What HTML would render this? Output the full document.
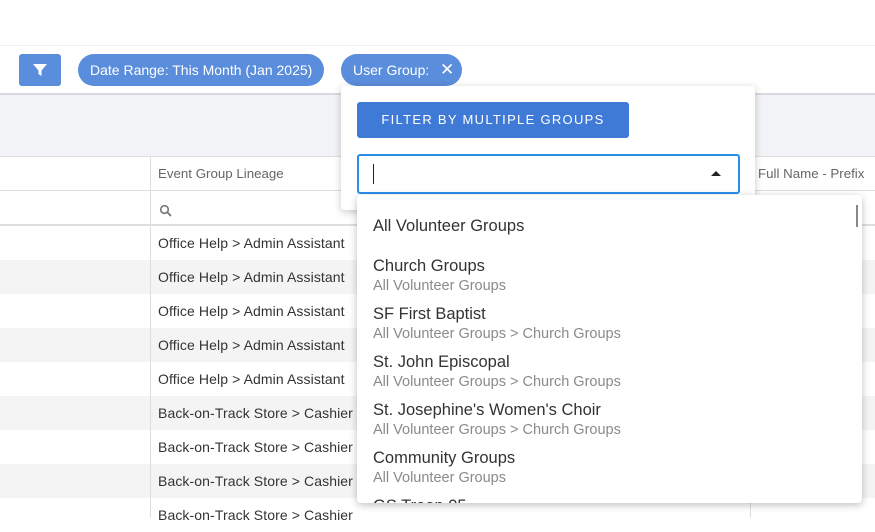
<!DOCTYPE html>
<html><head><style>
*{box-sizing:border-box;margin:0;padding:0}
body{width:875px;height:518px;overflow:hidden;background:#fff;font-family:"Liberation Sans","DejaVu Sans",sans-serif;position:relative;color:#333}
.abs{position:absolute}
.chip{position:absolute;top:54px;height:32px;border-radius:16px;background:#5a8ddb;color:#fff;font-size:14px;line-height:32px;padding:0 12px}
.row{position:absolute;left:0;width:875px;height:34px;font-size:14px;color:#333}
.row span{position:absolute;left:158px;top:9px;letter-spacing:0.1px}
.g{background:#f4f4f4}
.item{position:absolute;left:373px;font-size:16.5px;color:#333}
.sub{position:absolute;left:373px;font-size:14.5px;color:#8a8a8a}
</style></head><body>
<div class="abs" style="left:0;top:45px;width:875px;height:1px;background:#eceef2"></div>
<div class="abs" style="left:0;top:93px;width:875px;height:2px;background:#d8dadf"></div>
<div class="abs" style="left:0;top:95px;width:875px;height:61px;background:#f2f3f6"></div>
<div class="abs" style="left:0;top:156px;width:875px;height:1px;background:#dedede"></div>
<div class="abs" style="left:0;top:190px;width:875px;height:1px;background:#dedede"></div>
<div class="abs" style="left:0;top:224px;width:875px;height:2px;background:#dedede"></div>
<div class="abs" style="left:158px;top:166px;font-size:13.3px;color:#666">Event Group Lineage</div>
<div class="abs" style="left:758px;top:166px;font-size:13.3px;color:#666">Full Name - Prefix</div>
<svg class="abs" style="left:159px;top:204px" width="14" height="14" viewBox="0 0 14 14"><circle cx="5.5" cy="5.5" r="3.8" fill="none" stroke="#777" stroke-width="1.6"/><path d="M8.3 8.3L12 12" stroke="#777" stroke-width="1.8"/></svg>
<div class="row" style="top:226px"><span>Office Help &gt; Admin Assistant</span></div>
<div class="row g" style="top:260px"><span>Office Help &gt; Admin Assistant</span></div>
<div class="row" style="top:294px"><span>Office Help &gt; Admin Assistant</span></div>
<div class="row g" style="top:328px"><span>Office Help &gt; Admin Assistant</span></div>
<div class="row" style="top:362px"><span>Office Help &gt; Admin Assistant</span></div>
<div class="row g" style="top:396px"><span>Back-on-Track Store &gt; Cashier</span></div>
<div class="row" style="top:430px"><span>Back-on-Track Store &gt; Cashier</span></div>
<div class="row g" style="top:464px"><span>Back-on-Track Store &gt; Cashier</span></div>
<div class="row" style="top:498px"><span>Back-on-Track Store &gt; Cashier</span></div>
<div class="abs" style="left:150px;top:156px;width:1px;height:362px;background:#dedede"></div>
<div class="abs" style="left:750px;top:156px;width:1px;height:362px;background:#dedede"></div>

<div class="abs" style="left:19px;top:54px;width:42px;height:32px;border-radius:3px;background:#5a8ddb"></div>
<svg class="abs" style="left:32px;top:62px" width="16" height="16" viewBox="0 0 16 16"><path d="M1 2H15L9.5 8.5V14L6.5 12V8.5Z" fill="#fff"/></svg>
<div class="chip" style="left:78px">Date Range: This Month (Jan 2025)</div>
<div class="chip" style="left:341px;width:121px">User Group:<span style="position:absolute;left:99px;top:0;font-size:17px">✕</span></div>

<div class="abs" style="left:341px;top:86px;width:414px;height:124px;background:#fff;border-radius:4px;box-shadow:0 2px 8px rgba(0,0,0,.22)"></div>
<div class="abs" style="left:357px;top:102px;width:272px;height:36px;background:#3f7bd6;border-radius:3px;color:#fff;font-size:13px;letter-spacing:1.3px;line-height:36px;text-align:center">FILTER BY MULTIPLE GROUPS</div>
<div class="abs" style="left:357px;top:154px;width:383px;height:40px;border:2px solid #2a8ee8;border-radius:3px;background:#fff"></div>
<div class="abs" style="left:373px;top:164px;width:1px;height:20px;background:#222"></div>
<svg class="abs" style="left:710px;top:170px" width="12" height="7"><path d="M1 6L6 1L11 6Z" fill="#222"/></svg>

<div class="abs" style="left:357px;top:195px;width:505px;height:308px;background:#fff;border-radius:4px;box-shadow:0 2px 8px rgba(0,0,0,.25);overflow:hidden">
<div class="abs" style="right:4px;top:10px;width:2px;height:22px;background:#888"></div>
</div>
<div class="item" style="top:217px">All Volunteer Groups</div>
<div class="item" style="top:257px">Church Groups</div><div class="sub" style="top:278px">All Volunteer Groups</div>
<div class="item" style="top:305px">SF First Baptist</div><div class="sub" style="top:326px">All Volunteer Groups &gt; Church Groups</div>
<div class="item" style="top:353px">St. John Episcopal</div><div class="sub" style="top:374px">All Volunteer Groups &gt; Church Groups</div>
<div class="item" style="top:401px">St. Josephine's Women's Choir</div><div class="sub" style="top:422px">All Volunteer Groups &gt; Church Groups</div>
<div class="item" style="top:449px">Community Groups</div><div class="sub" style="top:470px">All Volunteer Groups</div>
<div class="abs" style="left:357px;top:490px;width:505px;height:13px;overflow:hidden;border-radius:0 0 4px 4px"><div class="abs" style="left:16px;top:7px;font-size:16.5px;color:#333">GS Troop 05</div></div>
</body></html>
